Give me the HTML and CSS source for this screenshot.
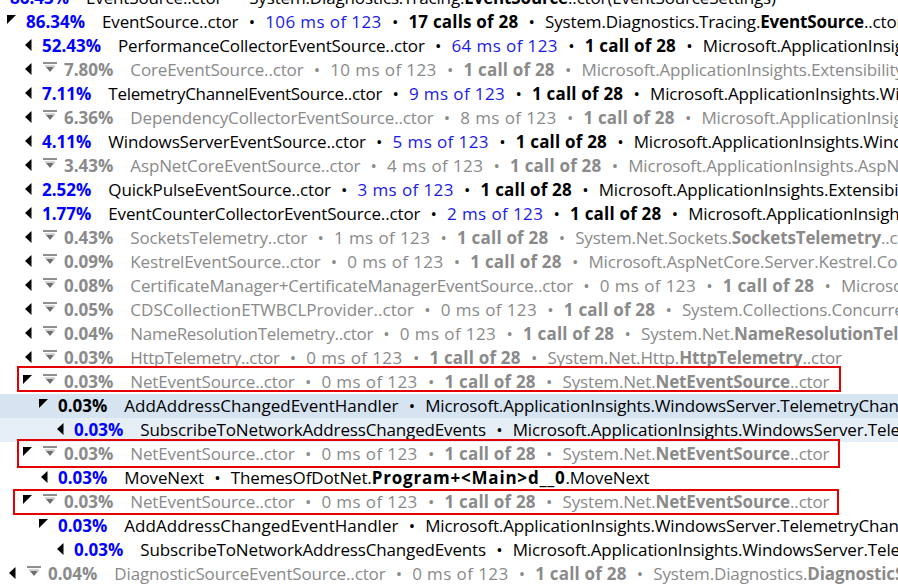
FILE: index.html
```html
<!DOCTYPE html>
<html lang="en">
<head>
<meta charset="utf-8">
<title>Call tree</title>
<link rel="stylesheet" href="styles.css">
</head>
<body>
<svg class="defs" width="0" height="0" aria-hidden="true">
  <symbol id="open" viewBox="0 0 9 9"><path d="M0 9V0H9Z"/></symbol>
  <symbol id="closed" viewBox="0 0 7 12"><path d="M6.5 0V12L0 6Z"/></symbol>
  <symbol id="filter" viewBox="0 0 14 10"><path class="f1" d="M0 0H14V2H0Z"/><path class="f2" d="M2 3H12V5H2Z"/><path class="f3" d="M3 5H11L7 10Z"/></symbol>
</svg>
<main class="tree">
  <div class="row l0b"><span class="pct hot">86.43%</span><span class="name">EventSource..ctor</span><span class="dot">•</span><span>System.Diagnostics.Tracing.<b>EventSource</b>..ctor(EventSourceSettings)</span></div>
  <div class="row l0"><svg class="tw o"><use href="#open"/></svg><span class="pct hot">86.34%</span><span class="name">EventSource..ctor</span><span class="dot">•</span><span class="t ms">106 ms of 123</span><span class="dot">•</span><b>17 calls of 28</b><span class="dot">•</span><span>System.Diagnostics.Tracing.<b>EventSource</b>..ctor</span></div>
  <div class="row l1"><svg class="tw c"><use href="#closed"/></svg><span class="pct hot">52.43%</span><span class="name">PerformanceCollectorEventSource..ctor</span><span class="dot">•</span><span class="t ms">64 ms of 123</span><span class="dot">•</span><b>1 call of 28</b><span class="dot">•</span><span>Microsoft.ApplicationInsights.Extensibility</span></div>
  <div class="row l1 dim"><svg class="tw c"><use href="#closed"/></svg><svg class="fi"><use href="#filter"/></svg><span class="pct">7.80%</span><span class="name">CoreEventSource..ctor</span><span class="dot">•</span><span class="t">10 ms of 123</span><span class="dot">•</span><b>1 call of 28</b><span class="dot">•</span><span>Microsoft.ApplicationInsights.Extensibility</span></div>
  <div class="row l1"><svg class="tw c"><use href="#closed"/></svg><span class="pct hot">7.11%</span><span class="name tl">TelemetryChannelEventSource..ctor</span><span class="dot">•</span><span class="t ms">9 ms of 123</span><span class="dot">•</span><b>1 call of 28</b><span class="dot">•</span><span>Microsoft.ApplicationInsights.WindowsServer</span></div>
  <div class="row l1 dim"><svg class="tw c"><use href="#closed"/></svg><svg class="fi"><use href="#filter"/></svg><span class="pct">6.36%</span><span class="name">DependencyCollectorEventSource..ctor</span><span class="dot">•</span><span class="t">8 ms of 123</span><span class="dot">•</span><b>1 call of 28</b><span class="dot">•</span><span>Microsoft.ApplicationInsights.DependencyCollector</span></div>
  <div class="row l1"><svg class="tw c"><use href="#closed"/></svg><span class="pct hot">4.11%</span><span class="name">WindowsServerEventSource..ctor</span><span class="dot">•</span><span class="t ms">5 ms of 123</span><span class="dot">•</span><b>1 call of 28</b><span class="dot">•</span><span>Microsoft.ApplicationInsights.WindowsServer</span></div>
  <div class="row l1 dim"><svg class="tw c"><use href="#closed"/></svg><svg class="fi"><use href="#filter"/></svg><span class="pct">3.43%</span><span class="name">AspNetCoreEventSource..ctor</span><span class="dot">•</span><span class="t">4 ms of 123</span><span class="dot">•</span><b>1 call of 28</b><span class="dot">•</span><span>Microsoft.ApplicationInsights.AspNetCore</span></div>
  <div class="row l1"><svg class="tw c"><use href="#closed"/></svg><span class="pct hot">2.52%</span><span class="name">QuickPulseEventSource..ctor</span><span class="dot">•</span><span class="t ms">3 ms of 123</span><span class="dot">•</span><b>1 call of 28</b><span class="dot">•</span><span>Microsoft.ApplicationInsights.Extensibility</span></div>
  <div class="row l1"><svg class="tw c"><use href="#closed"/></svg><span class="pct hot">1.77%</span><span class="name">EventCounterCollectorEventSource..ctor</span><span class="dot">•</span><span class="t ms">2 ms of 123</span><span class="dot">•</span><b>1 call of 28</b><span class="dot">•</span><span>Microsoft.ApplicationInsights.Extensibility</span></div>
  <div class="row l1 dim"><svg class="tw c"><use href="#closed"/></svg><svg class="fi"><use href="#filter"/></svg><span class="pct">0.43%</span><span class="name">SocketsTelemetry..ctor</span><span class="dot">•</span><span class="t">1 ms of 123</span><span class="dot">•</span><b>1 call of 28</b><span class="dot">•</span><span>System.Net.Sockets.<b>SocketsTelemetry</b>..ctor</span></div>
  <div class="row l1 dim"><svg class="tw c"><use href="#closed"/></svg><svg class="fi"><use href="#filter"/></svg><span class="pct">0.09%</span><span class="name">KestrelEventSource..ctor</span><span class="dot">•</span><span class="t">0 ms of 123</span><span class="dot">•</span><b>1 call of 28</b><span class="dot">•</span><span>Microsoft.AspNetCore.Server.Kestrel.Core</span></div>
  <div class="row l1 dim"><svg class="tw c"><use href="#closed"/></svg><svg class="fi"><use href="#filter"/></svg><span class="pct">0.08%</span><span class="name">CertificateManager+CertificateManagerEventSource..ctor</span><span class="dot">•</span><span class="t">0 ms of 123</span><span class="dot">•</span><b>1 call of 28</b><span class="dot">•</span><span>Microsoft.AspNetCore</span></div>
  <div class="row l1 dim"><svg class="tw c"><use href="#closed"/></svg><svg class="fi"><use href="#filter"/></svg><span class="pct">0.05%</span><span class="name wd">CDSCollectionETWBCLProvider..ctor</span><span class="dot">•</span><span class="t">0 ms of 123</span><span class="dot">•</span><b>1 call of 28</b><span class="dot">•</span><span>System.Collections.Concurrent</span></div>
  <div class="row l1 dim"><svg class="tw c"><use href="#closed"/></svg><svg class="fi"><use href="#filter"/></svg><span class="pct">0.04%</span><span class="name tl">NameResolutionTelemetry..ctor</span><span class="dot">•</span><span class="t">0 ms of 123</span><span class="dot">•</span><b>1 call of 28</b><span class="dot">•</span><span>System.Net.<b>NameResolutionTelemetry</b></span></div>
  <div class="row l1 dim"><svg class="tw c"><use href="#closed"/></svg><svg class="fi"><use href="#filter"/></svg><span class="pct">0.03%</span><span class="name tl">HttpTelemetry..ctor</span><span class="dot">•</span><span class="t">0 ms of 123</span><span class="dot">•</span><b>1 call of 28</b><span class="dot">•</span><span>System.Net.Http.<b>HttpTelemetry</b>..ctor</span></div>
  <div class="row l1 dim"><svg class="tw o"><use href="#open"/></svg><svg class="fi"><use href="#filter"/></svg><span class="pct">0.03%</span><span class="name">NetEventSource..ctor</span><span class="dot">•</span><span class="t">0 ms of 123</span><span class="dot">•</span><b>1 call of 28</b><span class="dot">•</span><span>System.Net.<b>NetEventSource</b>..ctor</span><i class="mark m1"></i></div>
  <div class="row l2 sel"><svg class="tw o"><use href="#open"/></svg><b class="pct">0.03%</b><span class="name wd">AddAddressChangedEventHandler</span><span class="dot">•</span><span>Microsoft.ApplicationInsights.WindowsServer.TelemetryChannel</span></div>
  <div class="row l3 sel2"><svg class="tw c"><use href="#closed"/></svg><span class="pct hot">0.03%</span><span class="name">SubscribeToNetworkAddressChangedEvents</span><span class="dot">•</span><span>Microsoft.ApplicationInsights.WindowsServer.TelemetryChannel</span></div>
  <div class="row l1 dim"><svg class="tw o"><use href="#open"/></svg><svg class="fi"><use href="#filter"/></svg><span class="pct">0.03%</span><span class="name">NetEventSource..ctor</span><span class="dot">•</span><span class="t">0 ms of 123</span><span class="dot">•</span><b>1 call of 28</b><span class="dot">•</span><span>System.Net.<b>NetEventSource</b>..ctor</span><i class="mark m2"></i></div>
  <div class="row l2"><svg class="tw c"><use href="#closed"/></svg><span class="pct hot">0.03%</span><span class="name">MoveNext</span><span class="dot">•</span><span>ThemesOfDotNet.<b class="pm">Program+&lt;Main&gt;d__0</b>.MoveNext</span></div>
  <div class="row l1 dim"><svg class="tw o"><use href="#open"/></svg><svg class="fi"><use href="#filter"/></svg><span class="pct">0.03%</span><span class="name">NetEventSource..ctor</span><span class="dot">•</span><span class="t">0 ms of 123</span><span class="dot">•</span><b>1 call of 28</b><span class="dot">•</span><span>System.Net.<b>NetEventSource</b>..ctor</span><i class="mark m3"></i></div>
  <div class="row l2"><svg class="tw o"><use href="#open"/></svg><span class="pct hot">0.03%</span><span class="name wd">AddAddressChangedEventHandler</span><span class="dot">•</span><span>Microsoft.ApplicationInsights.WindowsServer.TelemetryChannel</span></div>
  <div class="row l3"><svg class="tw c"><use href="#closed"/></svg><span class="pct hot">0.03%</span><span class="name">SubscribeToNetworkAddressChangedEvents</span><span class="dot">•</span><span>Microsoft.ApplicationInsights.WindowsServer.TelemetryChannel</span></div>
  <div class="row l0c dim"><svg class="tw c"><use href="#closed"/></svg><svg class="fi"><use href="#filter"/></svg><span class="pct">0.04%</span><span class="name">DiagnosticSourceEventSource..ctor</span><span class="dot">•</span><span class="t">0 ms of 123</span><span class="dot">•</span><b>1 call of 28</b><span class="dot">•</span><span>System.Diagnostics.<b>DiagnosticSource</b></span></div>
</main>
</body>
</html>
```

FILE: styles.css
```css
html, body {
  margin: 0;
  padding: 0;
  width: 898px;
  height: 588px;
  overflow: hidden;
  background: #fff;
}
.defs { position: absolute; }
.tree {
  margin-top: -14px;
  font-family: "Open Sans", "Noto Sans", sans-serif;
  font-size: 17px;
  letter-spacing: -0.15px;
  color: #000;
}
.row {
  position: relative;
  display: flex;
  align-items: center;
  box-sizing: border-box;
  height: 24px;
  padding-bottom: 2px;
  white-space: nowrap;
}
.row > * { flex: none; }
.row > b { letter-spacing: 0.2px; }
.l0b { padding-left: 10px; }
.l0 { padding-left: 7px; }
.l1 { padding-left: 25px; }
.l2 { padding-left: 39px; }
.l3 { padding-left: 57px; }
.l0c { padding-left: 9px; }
.tw { fill: #000; }
.tw.o { width: 9px; height: 9px; margin: -3px 10px 0 0; }
.tw.c { width: 7px; height: 12px; margin: -1px 10px 0 0; }
.l1 .tw.o { margin-left: -2px; }
.l2 .tw.c { margin-left: 2px; }
.fi { width: 14px; height: 10px; margin: -4px 7px 0 1px; }
.f1 { fill: #8e8e8e; }
.f2 { fill: #d4d4d4; }
.f3 { fill: #6f6f6f; }
.row > .pct { font-weight: 700; margin-right: 17px; letter-spacing: 0; }
.t { letter-spacing: 0.4px; }
.tl { letter-spacing: -0.3px; }
.wd { letter-spacing: 0.02px; }
.pm { letter-spacing: 0.8px; }
.hot { color: #0000ff; }
.ms { color: #1a1ae6; }
.dot { margin: 0 10.25px; }
.dim { color: #8a8a8a; }
.sel { background: #d6e4f2; }
.sel2 { background: #e6eef8; }
.mark {
  position: absolute;
  z-index: 1;
  box-sizing: border-box;
  border: 2px solid #e60000;
  pointer-events: none;
}
.m1 { left: 17px; top: -4px; width: 824px; height: 26px; }
.m2 { left: 17px; top: -3px; width: 823px; height: 29px; }
.m3 { left: 13px; top: -1px; width: 826px; height: 26px; }
```
